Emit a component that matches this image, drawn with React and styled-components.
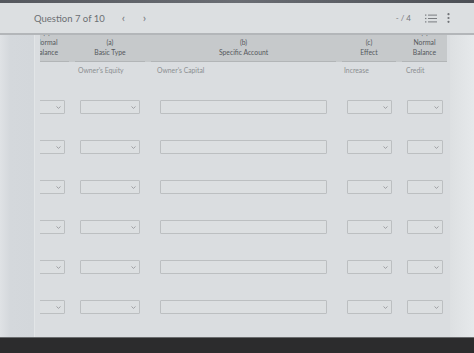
import styled, { createGlobalStyle } from 'styled-components';

const GlobalStyle = createGlobalStyle`
  html, body {
    margin: 0;
    padding: 0;
    background: #d9dcde;
  }
  body {
    font-family: Lato, "Liberation Sans", sans-serif;
  }
`;

const COLUMNS = '45px 70px 185px 54px 45px';

const Screen = styled.div`
  width: 474px;
  height: 353px;
  display: flex;
  flex-direction: column;
  overflow: hidden;
  background: #d9dcde;
`;

const TopEdge = styled.div`
  height: 3px;
  background: linear-gradient(90deg, #55585e, #6a6d73 50%, #4c4f55);
`;

const QuizBar = styled.div`
  height: 30px;
  display: flex;
  align-items: center;
  padding: 0 24px 0 34px;
  background: #dcdfe1;
  border-bottom: 2px solid #b3b6b9;
  color: #6c6f73;
`;

const Title = styled.span`
  font-size: 9.5px;
  margin-right: 17px;
`;

const NavArrow = styled.span`
  font-size: 12px;
  line-height: 12px;
  width: 21px;
  color: #75787c;
`;

const Spacer = styled.div`
  flex: 1;
`;

const Points = styled.span`
  font-size: 8px;
  margin-right: 14px;
  color: #75787c;
`;

const IconButton = styled.span`
  display: flex;
  align-items: center;
  margin-left: ${({ $gap }) => $gap || 0}px;
  color: #7a7d81;
`;

const Main = styled.div`
  flex: 1;
  display: flex;
  min-height: 0;
`;

const LeftRail = styled.div`
  width: 34px;
  background: linear-gradient(90deg, #dfe2e5 0, #d4d8dc 10px, #d3d7db 100%);
  border-right: 1px solid #e2e5e7;
`;

const Content = styled.div`
  flex: 1;
  padding-left: 5px;
  background: #dadde0;
`;

const RightRail = styled.div`
  width: 24px;
  background: linear-gradient(90deg, #dde0e2, #e6e9eb);
`;

const Scroller = styled.div`
  width: 407px;
  overflow: hidden;
`;

const Table = styled.div`
  margin-left: -18px;
  width: 425px;
  display: flex;
  flex-direction: column;
`;

const Row = styled.div`
  display: grid;
  grid-template-columns: ${COLUMNS};
  column-gap: 6px;
  padding-left: 2px;
  height: ${({ $h }) => $h}px;
  align-items: ${({ $align }) => $align || 'center'};
`;

const HeaderRow = styled(Row)`
  background: #c6c9cb;
`;

const HeaderCell = styled.div`
  height: 100%;
  display: flex;
  flex-direction: column;
  justify-content: flex-end;
  align-items: center;
  padding-bottom: 4px;
  box-sizing: border-box;
  border-bottom: 1px solid #b2b5b7;
  overflow: hidden;
  font-size: 6.8px;
  line-height: 10px;
  color: #55585c;
  white-space: nowrap;
`;

const SampleCell = styled.div`
  font-size: 6.8px;
  color: #8b8e91;
  padding-top: 4px;
  padding-left: ${({ $pl }) => $pl || 0}px;
  white-space: nowrap;
`;

const Cell = styled.div`
  display: flex;
  justify-content: center;
`;

const Field = styled.div`
  position: relative;
  width: ${({ $w }) => $w}px;
  height: 14px;
  box-sizing: border-box;
  border: 1px solid #bcbfc1;
  border-radius: 1px;
  background: #dcdfe1;
`;

const Chevron = styled.svg`
  position: absolute;
  right: 3px;
  top: 5px;
`;

const BottomBar = styled.div`
  height: 15px;
  background: #2c2c2d;
  border-top: 1px solid #6a6c6e;
`;

const ListIcon = () => (
  <svg width="12" height="9" viewBox="0 0 12 9">
    <g fill="#7a7d81">
      <rect x="0" y="0.5" width="1.4" height="1.2" />
      <rect x="0" y="3.9" width="1.4" height="1.2" />
      <rect x="0" y="7.3" width="1.4" height="1.2" />
      <rect x="3" y="0.6" width="9" height="1" />
      <rect x="3" y="4" width="9" height="1" />
      <rect x="3" y="7.4" width="9" height="1" />
    </g>
  </svg>
);

const KebabIcon = () => (
  <svg width="3" height="10" viewBox="0 0 3 10">
    <g fill="#6f7276">
      <circle cx="1.5" cy="1.2" r="1.1" />
      <circle cx="1.5" cy="5" r="1.1" />
      <circle cx="1.5" cy="8.8" r="1.1" />
    </g>
  </svg>
);

const Select = ({ width }) => (
  <Field $w={width}>
    <Chevron width="5" height="3" viewBox="0 0 5 3">
      <path d="M0.5 0.5 L2.5 2.4 L4.5 0.5" fill="none" stroke="#979a9d" strokeWidth="0.9" />
    </Chevron>
  </Field>
);

const rows = [0, 1, 2, 3, 4, 5];

export default function App() {
  return (
    <Screen>
      <GlobalStyle />
      <TopEdge />
      <QuizBar>
        <Title>Question 7 of 10</Title>
        <NavArrow>&lsaquo;</NavArrow>
        <NavArrow>&rsaquo;</NavArrow>
        <Spacer />
        <Points>- / 4</Points>
        <IconButton><ListIcon /></IconButton>
        <IconButton $gap={10}><KebabIcon /></IconButton>
      </QuizBar>
      <Main>
        <LeftRail />
        <Content>
          <Scroller>
            <Table>
              <HeaderRow $h={27}>
                <HeaderCell><span>(d)</span><span>Normal</span><span>Balance</span></HeaderCell>
                <HeaderCell><span>(a)</span><span>Basic Type</span></HeaderCell>
                <HeaderCell><span>(b)</span><span>Specific Account</span></HeaderCell>
                <HeaderCell><span>(c)</span><span>Effect</span></HeaderCell>
                <HeaderCell><span>(d)</span><span>Normal</span><span>Balance</span></HeaderCell>
              </HeaderRow>
              <Row $h={25} $align="start">
                <SampleCell />
                <SampleCell $pl={3}>Owner's Equity</SampleCell>
                <SampleCell $pl={6}>Owner's Capital</SampleCell>
                <SampleCell $pl={2}>Increase</SampleCell>
                <SampleCell $pl={4}>Credit</SampleCell>
              </Row>
              {rows.map((r) => (
                <Row key={r} $h={40}>
                  <Cell><Select width={36} /></Cell>
                  <Cell><Select width={60} /></Cell>
                  <Cell><Field $w={167} /></Cell>
                  <Cell><Select width={45} /></Cell>
                  <Cell><Select width={36} /></Cell>
                </Row>
              ))}
            </Table>
          </Scroller>
        </Content>
        <RightRail />
      </Main>
      <BottomBar />
    </Screen>
  );
}
